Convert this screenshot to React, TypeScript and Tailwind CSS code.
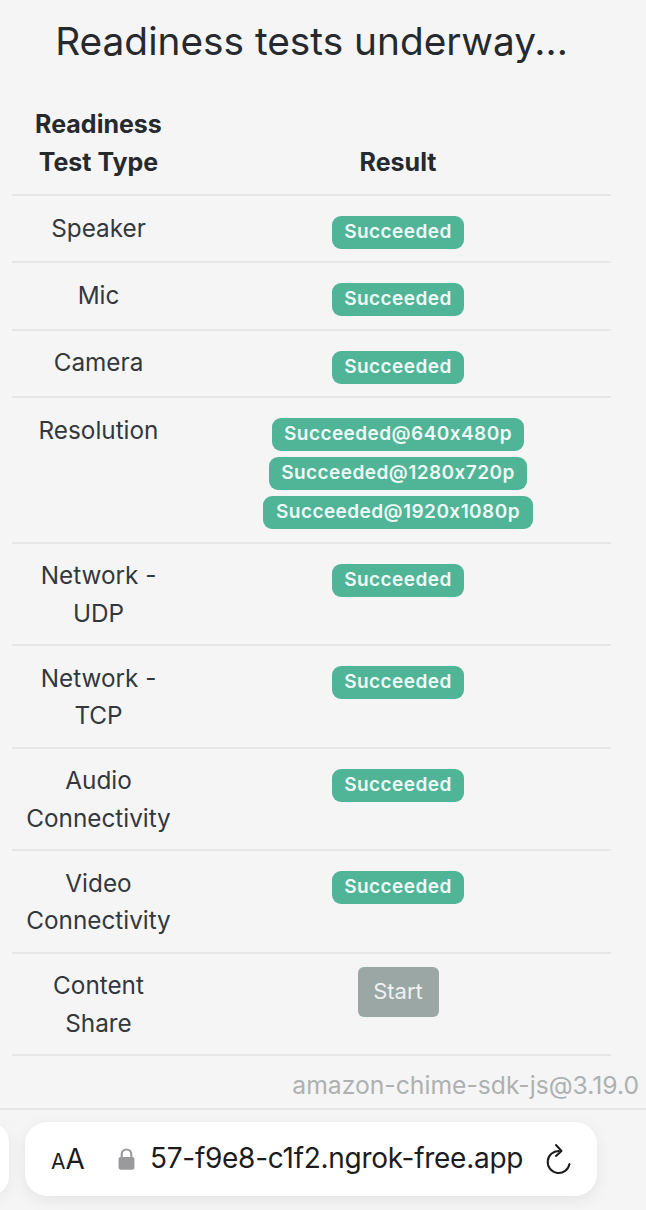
const rows = [
    { name: ["Speaker"], badges: ["Succeeded"] },
    { name: ["Mic"], badges: ["Succeeded"] },
    { name: ["Camera"], badges: ["Succeeded"] },
    { name: ["Resolution"], badges: ["Succeeded@640x480p", "Succeeded@1280x720p", "Succeeded@1920x1080p"] },
    { name: ["Network -", "UDP"], badges: ["Succeeded"] },
    { name: ["Network -", "TCP"], badges: ["Succeeded"] },
    { name: ["Audio", "Connectivity"], badges: ["Succeeded"] },
    { name: ["Video", "Connectivity"], badges: ["Succeeded"] },
];

function Badge({ label }: { label: string }) {
    return (
        <div className="inline-block h-[33px] rounded-[9px] bg-[#50b497] px-[12.5px] text-[19px] font-semibold leading-[32px] tracking-[0.45px] text-[#effaf6]">
            {label}
        </div>
    );
}

function Cell({ lines }: { lines: string[] }) {
    return (
        <td className="px-0 pb-[12px] pt-[13.5px] text-center align-top">
            {lines.map((line) => (
                <div key={line} className="h-[37.5px]">{line}</div>
            ))}
        </td>
    );
}

export default function App() {
    return (
        <div className="flex h-[1210px] w-[646px] flex-col overflow-hidden bg-[#f5f5f5] font-['Inter',sans-serif] text-[24.3px] leading-[37.5px] text-[#33383c]">
            {/* Header */}
            <h1 className="w-[623px] pt-[16px] text-center text-[38.8px] font-normal leading-[50px] text-[#262a2e]">
                Readiness tests underway...
            </h1>

            {/* Tests */}
            <table className="ml-[12px] mt-[40px] w-[599px] table-fixed border-collapse">
                <thead>
                    <tr className="border-b-2 border-[#e6e7e7] text-[25px] text-[#262a2e]">
                        <th className="w-[173px] pb-[13px] pt-0 align-bottom font-bold">Readiness<br />Test Type</th>
                        <th className="pb-[13px] pt-0 align-bottom font-bold">Result</th>
                    </tr>
                </thead>
                <tbody>
                    {rows.map((row) => (
                        <tr key={row.name.join(" ")} className="border-b-2 border-[#e6e7e7]">
                            <Cell lines={row.name} />
                            <td className="pb-[12.4px] pt-[20px] text-center align-top">
                                <div className="flex flex-col items-center gap-[6px]">
                                    {row.badges.map((label) => (
                                        <Badge key={label} label={label} />
                                    ))}
                                </div>
                            </td>
                        </tr>
                    ))}
                    <tr className="border-b-2 border-[#e6e7e7]">
                        <Cell lines={["Content", "Share"]} />
                        <td className="pt-[13px] text-center align-top">
                            <button className="h-[50px] w-[81px] rounded-[6px] bg-[#9aa7a5] text-[22px] text-[#eef1f1]">Start</button>
                        </td>
                    </tr>
                </tbody>
            </table>

            {/* Version */}
            <div className="mt-[11px] pr-[7px] text-right text-[24.7px] leading-[37px] text-[#aeb1b1]">
                amazon-chime-sdk-js@3.19.0
            </div>

            {/* Browser bar */}
            <div className="mt-[4px] flex flex-1 items-start gap-[16px] border-t-2 border-[#e7e7e7] bg-[#f5f5f5] pt-[12px]">
                <div className="-ml-[40px] h-[74px] w-[49px] shrink-0 rounded-[20px] bg-white shadow-[0_4px_16px_rgba(0,0,0,0.06)]" />
                <div className="flex h-[74px] w-[572px] shrink-0 items-center rounded-[22px] bg-white pl-[26px] pr-[24px] text-[#1c1c1e] shadow-[0_4px_16px_rgba(0,0,0,0.07)]">
                    <span className="w-[34px] whitespace-nowrap text-[28px] leading-none"><span className="text-[21px]">A</span>A</span>
                    <svg viewBox="0 0 16 20" className="ml-[33px] h-[24px] w-[17px] shrink-0" fill="#9a9a9c">
                        <rect x="0.5" y="8" width="15" height="12" rx="2" />
                        <path d="M3.5 9V5.5a4.5 4.5 0 0 1 9 0V9" fill="none" stroke="#9a9a9c" strokeWidth="2" />
                    </svg>
                    <span className="ml-[15px] whitespace-nowrap text-[28px] tracking-[-0.28px]">57-f9e8-c1f2.ngrok-free.app</span>
                    <svg viewBox="0 0 28 32" className="ml-auto h-[32px] w-[28px] shrink-0" fill="none" stroke="#1c1c1e" strokeWidth="2" strokeLinecap="round" strokeLinejoin="round">
                        <path d="M24.5 21A11 11 0 1 1 14 8" />
                        <path d="M11 2l5.5 6L11 13" />
                    </svg>
                </div>
            </div>
        </div>
    );
}
